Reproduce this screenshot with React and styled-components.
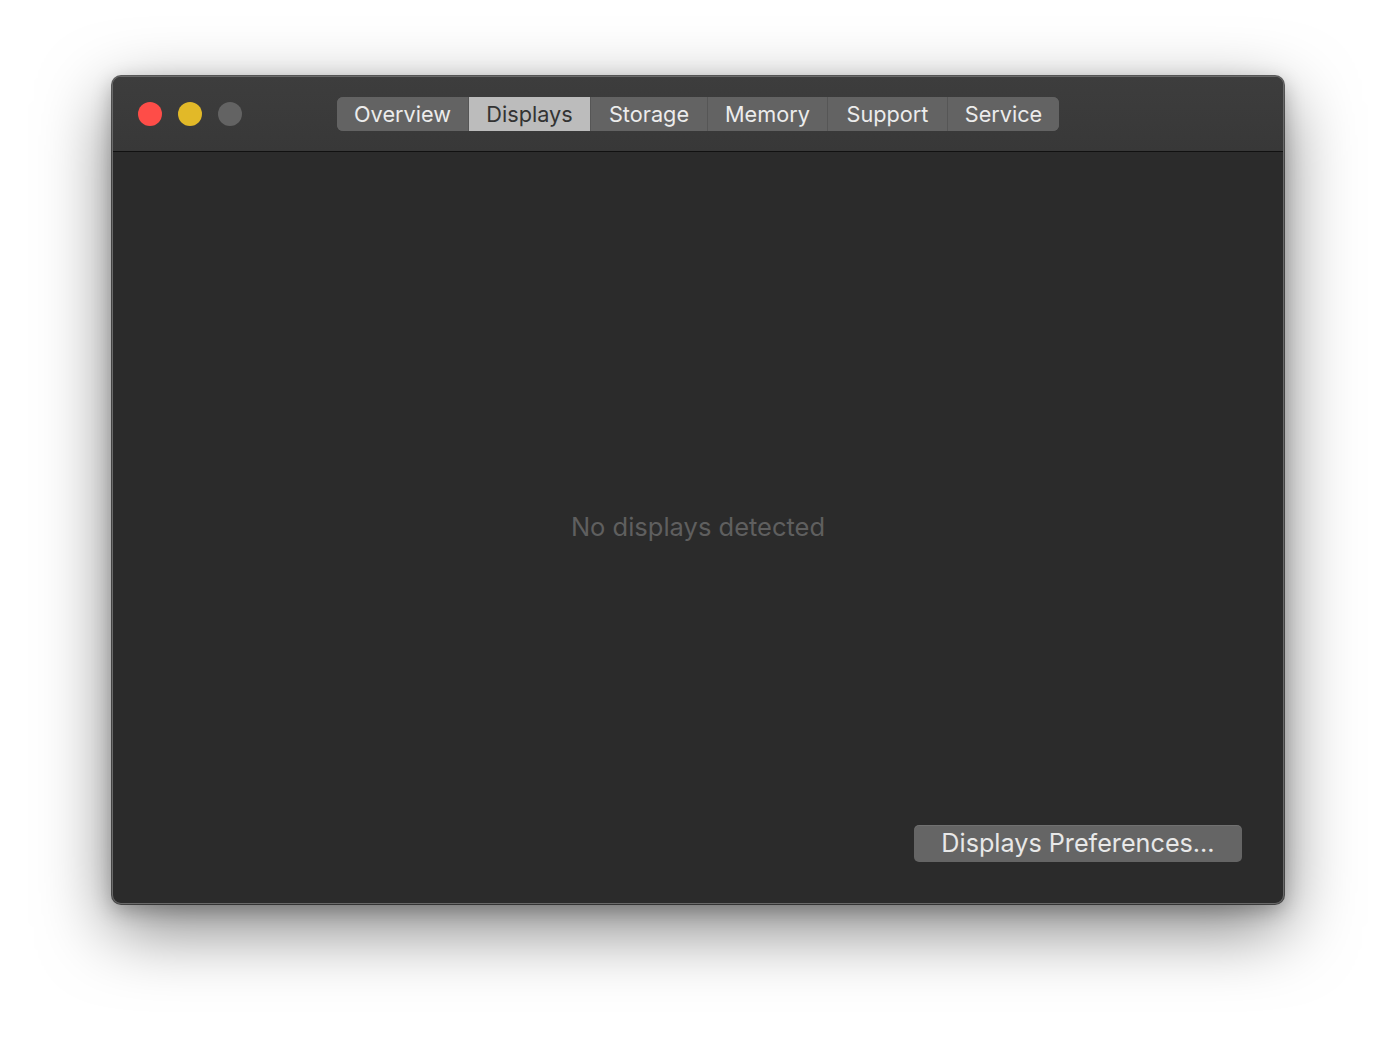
import React from "react";
import styled, { createGlobalStyle } from "styled-components";

const GlobalStyle = createGlobalStyle`
  html, body {
    margin: 0;
    padding: 0;
    background: #ffffff;
  }
  body {
    font-family: Inter, "Noto Sans", "DejaVu Sans", sans-serif;
    -webkit-font-smoothing: antialiased;
  }
`;

const Page = styled.div`
  width: 1396px;
  height: 1052px;
  padding: 76px 0 0 112px;
  box-sizing: border-box;
`;

const Window = styled.div`
  width: 1172px;
  height: 828px;
  box-sizing: border-box;
  border: 1px solid #6a6a6a;
  border-radius: 9px;
  background: #2b2b2b;
  overflow: hidden;
  display: flex;
  flex-direction: column;
  box-shadow: 0 0 0 1px rgba(0, 0, 0, 0.6), 0 24px 70px rgba(0, 0, 0, 0.5),
    0 6px 20px rgba(0, 0, 0, 0.25);
`;

const TitleBar = styled.div`
  height: 74px;
  flex: none;
  display: grid;
  grid-template-columns: 1fr auto 1fr;
  align-items: start;
  background: linear-gradient(#3d3d3d, #383838);
  border-bottom: 1px solid #111111;
`;

const Lights = styled.div`
  display: flex;
  gap: 16px;
  padding: 25px 0 0 25px;
`;

const Light = styled.span`
  width: 24px;
  height: 24px;
  border-radius: 50%;
  background: ${(p) => p.$color};
`;

const Tabs = styled.div`
  margin-top: 20px;
  display: flex;
  height: 34px;
  border-radius: 6px;
  overflow: hidden;
  background: #636363;
`;

const Tab = styled.div`
  width: ${(p) => p.$w}px;
  box-sizing: border-box;
  display: flex;
  align-items: center;
  justify-content: center;
  font-size: 21.7px;
  color: ${(p) => (p.$active ? "#333333" : "#ececec")};
  background: ${(p) => (p.$active ? "#bcbcbc" : "#636363")};
  & + & {
    border-left: 1px solid ${(p) => (p.$active ? "#bcbcbc" : "#565656")};
  }
`;

const Content = styled.div`
  flex: 1;
  display: grid;
  & > * {
    grid-area: 1 / 1;
  }
`;

const Empty = styled.div`
  align-self: center;
  justify-self: center;
  color: #5f5f5f;
  font-size: 25.5px;
  margin-bottom: 2px;
`;

const Button = styled.button`
  align-self: end;
  justify-self: end;
  margin: 0 41px 41px 0;
  width: 328px;
  height: 37px;
  border: none;
  border-radius: 5px;
  background: #656565;
  color: #e8e8e8;
  font-family: inherit;
  font-size: 25.2px;
  padding: 0 0 1px;
  box-shadow: inset 0 1px 0 rgba(255, 255, 255, 0.08);
`;

const tabs = [
  { label: "Overview", w: 131 },
  { label: "Displays", w: 122, active: true },
  { label: "Storage", w: 117 },
  { label: "Memory", w: 120 },
  { label: "Support", w: 120 },
  { label: "Service", w: 112 },
];

export default function App() {
  return (
    <Page>
      <GlobalStyle />
      <Window>
        <TitleBar>
          <Lights>
            <Light $color="#fe4d48" />
            <Light $color="#e2b928" />
            <Light $color="#636363" />
          </Lights>
          <Tabs>
            {tabs.map((t) => (
              <Tab key={t.label} $w={t.w} $active={t.active}>
                {t.label}
              </Tab>
            ))}
          </Tabs>
          <div />
        </TitleBar>
        <Content>
          <Empty>No displays detected</Empty>
          <Button>Displays Preferences…</Button>
        </Content>
      </Window>
    </Page>
  );
}
